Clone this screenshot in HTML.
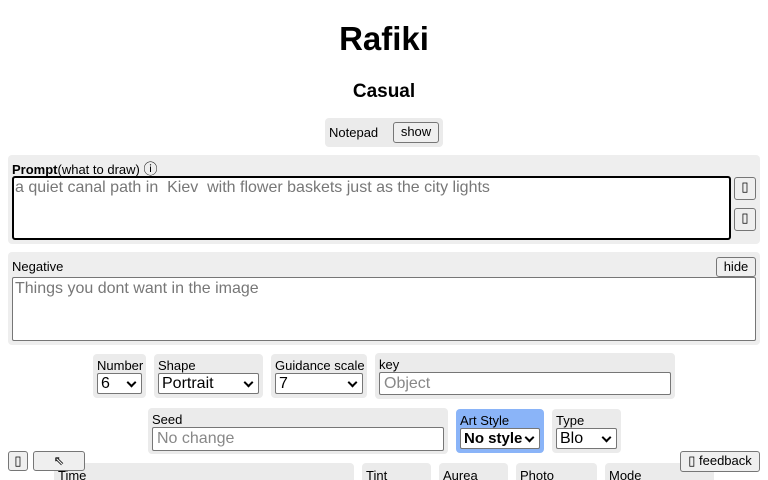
<!DOCTYPE html>
<html><head><style>
*{box-sizing:border-box;margin:0;padding:0}
html,body{width:768px;height:480px;overflow:hidden}
body{background:#fff;font-family:"Liberation Sans",sans-serif;color:#000;position:relative}
.a{position:absolute}
.box{position:absolute;background:#ebebeb;border-radius:4px}
.btn{position:absolute;background:#efefef;border:1px solid #767676;border-radius:3px;font-size:13px;text-align:center;line-height:18px}
.lbl{position:absolute;font-size:13px;white-space:nowrap}
.sel{position:absolute;background:#fff;border:1px solid #767676;border-radius:2px;font-size:16px;line-height:20px;padding-left:3px}
.sel:after{content:"";position:absolute;right:6px;top:5px;width:5px;height:5px;border-right:2px solid #000;border-bottom:2px solid #000;transform:rotate(45deg)}
.inp{position:absolute;background:#fff;border:1px solid #767676;border-radius:2px;font-size:16px;color:#888;padding-left:4px;line-height:22px}
</style></head><body>
<div class="a" style="left:0;width:768px;top:20px;text-align:center;font-size:33px;font-weight:bold">Rafiki</div>
<div class="a" style="left:0;width:768px;top:81px;text-align:center;font-size:19px;font-weight:bold">Casual</div>
<div class="box" style="left:325px;top:118px;width:118px;height:29px"></div>
<div class="lbl" style="left:329px;top:125px">Notepad</div>
<div class="btn" style="left:393px;top:122px;width:46px;height:21px">show</div>

<div class="box" style="left:8px;top:155px;width:752px;height:89px;background:#eee"></div>
<div class="lbl" style="left:12px;top:159px"><b>Prompt</b>(what to draw) <span style="font-size:14px">ⓘ</span></div>
<div class="a" style="left:12px;top:176px;width:719px;height:64px;background:#fff;border:2px solid #000;border-radius:3px;font-size:16px;color:#777;padding:1px 1px;line-height:18px">a quiet canal path in&nbsp; Kiev&nbsp; with flower baskets just as the city lights</div>
<div class="btn" style="left:734px;top:177px;width:22px;height:23px">▯</div>
<div class="btn" style="left:734px;top:208px;width:22px;height:23px">▯</div>

<div class="box" style="left:8px;top:252px;width:752px;height:93px;background:#eee"></div>
<div class="lbl" style="left:12px;top:259px">Negative</div>
<div class="btn" style="left:716px;top:257px;width:40px;height:20px">hide</div>
<div class="a" style="left:12px;top:277px;width:744px;height:64px;background:#fff;border:1px solid #767676;border-radius:2px;font-size:16px;color:#777;padding:2px 2px;line-height:18px">Things you dont want in the image</div>

<div class="box" style="left:93px;top:354px;width:53px;height:44px"></div>
<div class="lbl" style="left:97px;top:358px">Number</div>
<div class="sel" style="left:97px;top:373px;width:45px;height:21px">6</div>
<div class="box" style="left:154px;top:354px;width:109px;height:44px"></div>
<div class="lbl" style="left:158px;top:358px">Shape</div>
<div class="sel" style="left:158px;top:373px;width:101px;height:21px">Portrait</div>
<div class="box" style="left:271px;top:354px;width:96px;height:44px"></div>
<div class="lbl" style="left:275px;top:358px">Guidance scale</div>
<div class="sel" style="left:275px;top:373px;width:88px;height:21px">7</div>
<div class="box" style="left:375px;top:353px;width:300px;height:46px"></div>
<div class="lbl" style="left:379px;top:357px">key</div>
<div class="inp" style="left:379px;top:372px;width:292px;height:23px">Object</div>

<div class="box" style="left:148px;top:408px;width:300px;height:46px"></div>
<div class="lbl" style="left:152px;top:412px">Seed</div>
<div class="inp" style="left:152px;top:427px;width:292px;height:24px">No change</div>
<div class="box" style="left:456px;top:409px;width:88px;height:44px;background:#8ab4f8"></div>
<div class="lbl" style="left:460px;top:413px">Art Style</div>
<div class="sel" style="left:460px;top:428px;width:80px;height:21px;font-size:15px;font-weight:bold">No style</div>
<div class="box" style="left:552px;top:409px;width:69px;height:44px"></div>
<div class="lbl" style="left:556px;top:413px">Type</div>
<div class="sel" style="left:556px;top:428px;width:61px;height:21px">Blo</div>

<div class="box" style="left:54px;top:463px;width:300px;height:17px;border-radius:4px 4px 0 0"></div>
<div class="lbl" style="left:58px;top:468px">Time</div>
<div class="box" style="left:362px;top:463px;width:69px;height:17px;border-radius:4px 4px 0 0"></div>
<div class="lbl" style="left:366px;top:468px">Tint</div>
<div class="box" style="left:439px;top:463px;width:69px;height:17px;border-radius:4px 4px 0 0"></div>
<div class="lbl" style="left:443px;top:468px">Aurea</div>
<div class="box" style="left:516px;top:463px;width:81px;height:17px;border-radius:4px 4px 0 0"></div>
<div class="lbl" style="left:520px;top:468px">Photo</div>
<div class="box" style="left:605px;top:463px;width:109px;height:17px;border-radius:4px 4px 0 0"></div>
<div class="lbl" style="left:609px;top:468px">Mode</div>

<div class="btn" style="left:8px;top:451px;width:20px;height:20px">▯</div>
<div class="btn" style="left:33px;top:451px;width:52px;height:20px">⇖</div>
<div class="btn" style="left:680px;top:451px;width:80px;height:21px">▯ feedback</div>
</body></html>
